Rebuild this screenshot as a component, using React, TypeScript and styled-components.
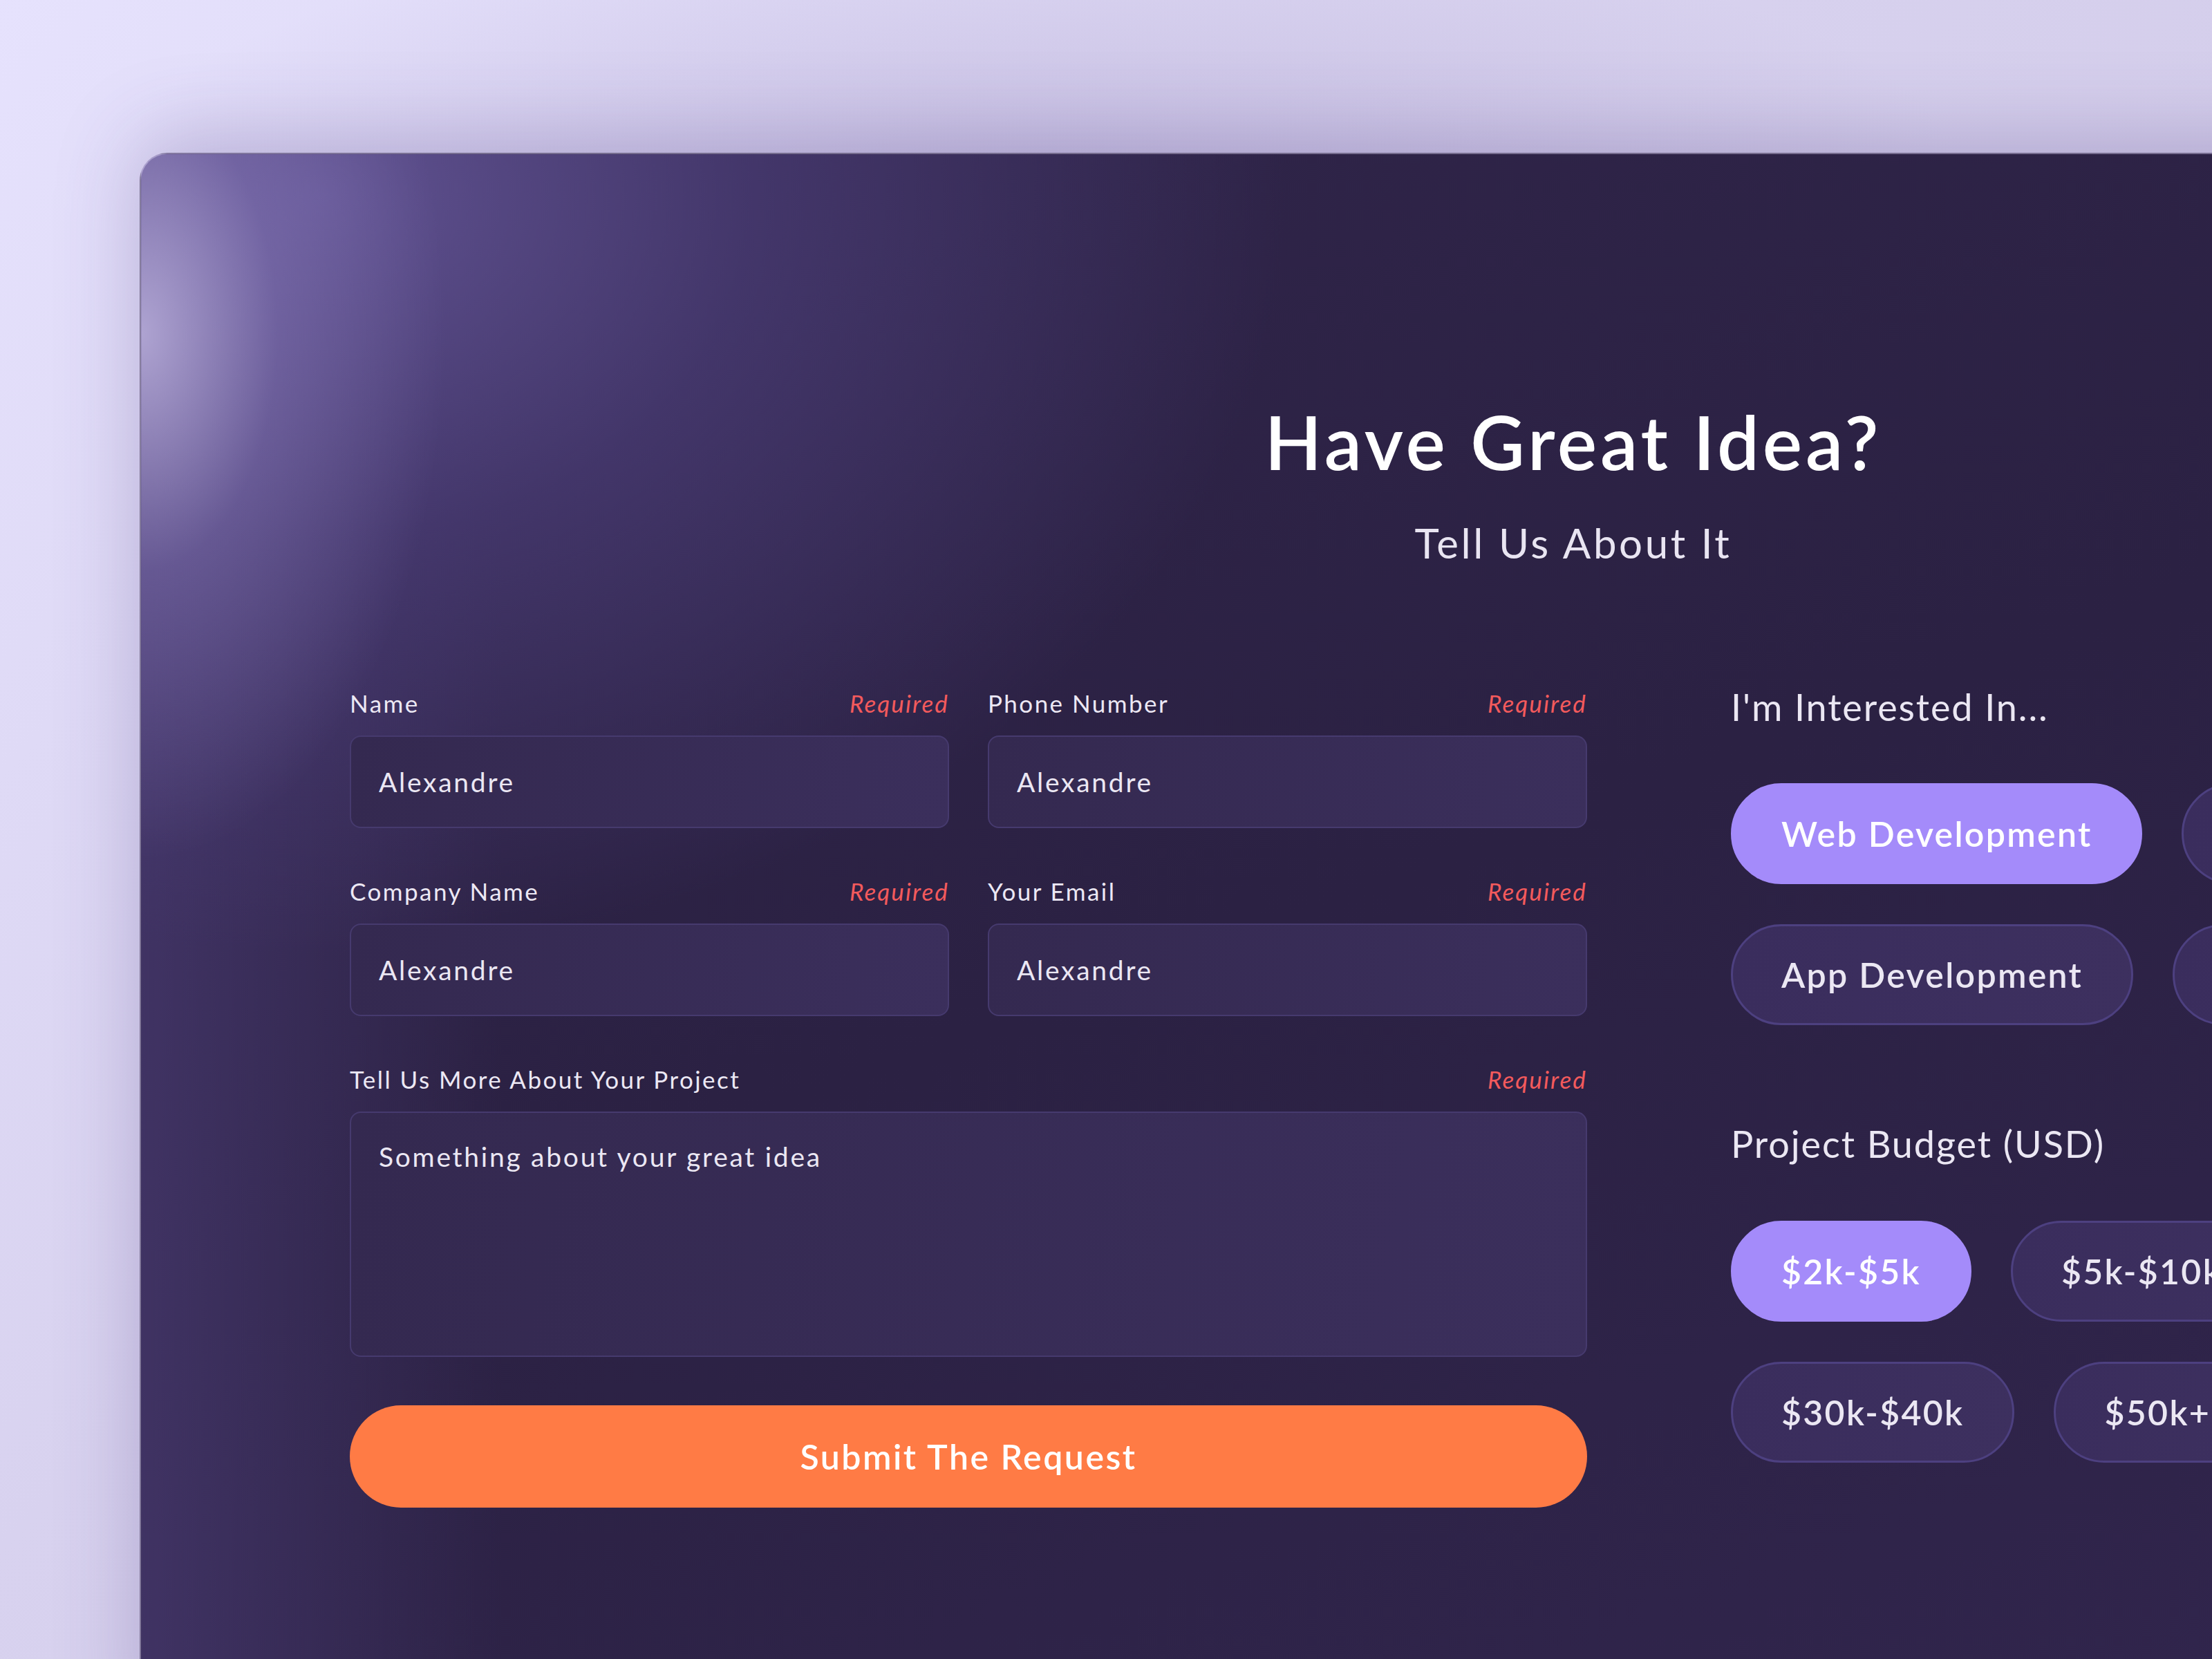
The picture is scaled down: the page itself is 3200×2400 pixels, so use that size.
import React from 'react'
import styled, { createGlobalStyle } from 'styled-components'

const interests = [
  [
    { label: 'Web Development', active: true },
    { label: 'UI/UX Design', active: false },
  ],
  [
    { label: 'App Development', active: false },
    { label: 'Branding', active: false },
  ],
]

const budgets = [
  [
    { label: '$2k-$5k', active: true },
    { label: '$5k-$10k', active: false },
    { label: '$10k-$20k', active: false },
  ],
  [
    { label: '$30k-$40k', active: false },
    { label: '$50k+', active: false },
  ],
]

const App: React.FC = () => {
  return (
    <>
      <GlobalStyle />
      <Page>
        <Card>
          <Header>
            <Title>Have Great Idea?</Title>
            <Subtitle>Tell Us About It</Subtitle>
          </Header>

          <Body>
            <Form onSubmit={(e) => e.preventDefault()}>
              <Field>
                <LabelRow>
                  <Label>Name</Label>
                  <Required>Required</Required>
                </LabelRow>
                <Input defaultValue="Alexandre" />
              </Field>
              <Field>
                <LabelRow>
                  <Label>Phone Number</Label>
                  <Required>Required</Required>
                </LabelRow>
                <Input defaultValue="Alexandre" />
              </Field>
              <Field>
                <LabelRow>
                  <Label>Company Name</Label>
                  <Required>Required</Required>
                </LabelRow>
                <Input defaultValue="Alexandre" />
              </Field>
              <Field>
                <LabelRow>
                  <Label>Your Email</Label>
                  <Required>Required</Required>
                </LabelRow>
                <Input defaultValue="Alexandre" />
              </Field>
              <Field $wide>
                <LabelRow>
                  <Label>Tell Us More About Your Project</Label>
                  <Required>Required</Required>
                </LabelRow>
                <TextArea defaultValue="Something about your great idea" />
              </Field>
              <SubmitButton type="submit">Submit The Request</SubmitButton>
            </Form>

            <Aside>
              <Group>
                <GroupTitle>I'm Interested In...</GroupTitle>
                <ChipRows>
                  {interests.map((row, i) => (
                    <ChipRow key={i}>
                      {row.map((chip) => (
                        <Chip key={chip.label} type="button" $active={chip.active}>
                          {chip.label}
                        </Chip>
                      ))}
                    </ChipRow>
                  ))}
                </ChipRows>
              </Group>
              <Group>
                <GroupTitle>Project Budget (USD)</GroupTitle>
                <ChipRows>
                  {budgets.map((row, i) => (
                    <ChipRow key={i}>
                      {row.map((chip) => (
                        <Chip key={chip.label} type="button" $active={chip.active}>
                          {chip.label}
                        </Chip>
                      ))}
                    </ChipRow>
                  ))}
                </ChipRows>
              </Group>
            </Aside>
          </Body>
        </Card>
      </Page>
    </>
  )
}

export default App

const GlobalStyle = createGlobalStyle`
  html, body {
    margin: 0;
    padding: 0;
    width: 3200px;
    height: 2400px;
    overflow: hidden;
  }

  body {
    font-family: Lato, 'Open Sans', sans-serif;
    background:
      radial-gradient(ellipse 1900px 520px at 1500px 240px, rgba(160, 148, 195, 0.32), transparent 70%),
      linear-gradient(135deg, #e6e2fd 0%, #d8d2ef 40%, #cdc6e4 100%);
  }
`

const Page = styled.div`
  padding: 221px 0 0 202px;
`

const Card = styled.main`
  box-sizing: border-box;
  width: 4146px;
  min-height: 2300px;
  padding: 351px 302px 0;
  border-top: 2px solid rgba(225, 218, 245, 0.4);
  border-left: 2px solid rgba(225, 218, 245, 0.45);
  border-radius: 40px 0 0 0;
  color: #ece8f4;
  background:
    radial-gradient(ellipse 440px 760px at 0px 260px, rgba(200, 190, 232, 0.78), rgba(150, 136, 200, 0.38) 45%, transparent 100%),
    radial-gradient(ellipse 1400px 1100px at 260px 60px, rgba(98, 84, 148, 0.95), rgba(80, 66, 128, 0.6) 45%, transparent 100%),
    linear-gradient(90deg, rgba(72, 58, 112, 0.7) 0px, transparent 520px),
    linear-gradient(160deg, #30254a 0%, #2b2143 45%, #32264f 100%);
  box-shadow: 0 -20px 120px rgba(80, 62, 130, 0.28);
`

const Header = styled.header`
  text-align: center;
`

const Title = styled.h1`
  margin: 0;
  font-size: 108px;
  line-height: 1.2;
  font-weight: 600;
  letter-spacing: 0.045em;
  color: #ffffff;
`

const Subtitle = styled.p`
  margin: 45px 0 0;
  font-size: 60px;
  line-height: 1.2;
  font-weight: 400;
  letter-spacing: 0.06em;
  color: #e9e5f2;
`

const Body = styled.div`
  display: grid;
  grid-template-columns: 1790px 1fr;
  column-gap: 208px;
  margin-top: 175px;
`

const Form = styled.form`
  display: grid;
  grid-template-columns: 1fr 1fr;
  column-gap: 56px;
  row-gap: 70px;
`

const Field = styled.label<{ $wide?: boolean }>`
  display: flex;
  flex-direction: column;
  gap: 26px;
  grid-column: ${({ $wide }) => ($wide ? '1 / -1' : 'auto')};
`

const LabelRow = styled.div`
  display: flex;
  justify-content: space-between;
  align-items: baseline;
  font-size: 35px;
  line-height: 1.2;
  letter-spacing: 0.07em;
`

const Label = styled.span`
  color: #ece8f4;
`

const Required = styled.span`
  font-style: italic;
  letter-spacing: 0.06em;
  color: #f35a5c;
`

const fieldBox = `
  box-sizing: border-box;
  width: 100%;
  border: 2px solid #463a6e;
  border-radius: 16px;
  background: linear-gradient(100deg, #342950 0%, #3b2f5c 100%);
  color: #ebe7f3;
  font-family: Lato, 'Open Sans', sans-serif;
  font-size: 39px;
  letter-spacing: 0.07em;
  outline: none;
`

const Input = styled.input`
  ${fieldBox}
  height: 134px;
  padding: 0 40px;
`

const TextArea = styled.textarea`
  ${fieldBox}
  height: 355px;
  padding: 40px 40px;
  line-height: 1.2;
  resize: none;
`

const SubmitButton = styled.button`
  grid-column: 1 / -1;
  height: 148px;
  border: none;
  border-radius: 74px;
  background: #ff7b45;
  color: #ffffff;
  font-family: Lato, 'Open Sans', sans-serif;
  font-size: 50px;
  font-weight: 600;
  letter-spacing: 0.05em;
  cursor: pointer;
`

const Aside = styled.aside`
  display: flex;
  flex-direction: column;
  gap: 140px;
  margin-top: -5px;
`

const Group = styled.section`
  display: flex;
  flex-direction: column;
  gap: 78px;
`

const GroupTitle = styled.h2`
  margin: 0;
  font-size: 54px;
  line-height: 1.2;
  font-weight: 400;
  letter-spacing: 0.035em;
  color: #ebe7f3;
`

const ChipRows = styled.div`
  display: flex;
  flex-direction: column;
  gap: 58px;
`

const ChipRow = styled.div`
  display: flex;
  gap: 57px;
`

const Chip = styled.button<{ $active?: boolean }>`
  flex: none;
  box-sizing: border-box;
  height: 146px;
  padding: 0 70px;
  border-radius: 73px;
  border: 3px solid ${({ $active }) => ($active ? '#a48bfa' : '#4d4080')};
  background: ${({ $active }) =>
    $active ? '#a48bfa' : 'linear-gradient(100deg, #3a2d5d, #3d305f)'};
  color: ${({ $active }) => ($active ? '#ffffff' : '#ebe7f3')};
  font-family: Lato, 'Open Sans', sans-serif;
  font-size: 50px;
  font-weight: 600;
  letter-spacing: 0.046em;
  white-space: nowrap;
  cursor: pointer;
`
